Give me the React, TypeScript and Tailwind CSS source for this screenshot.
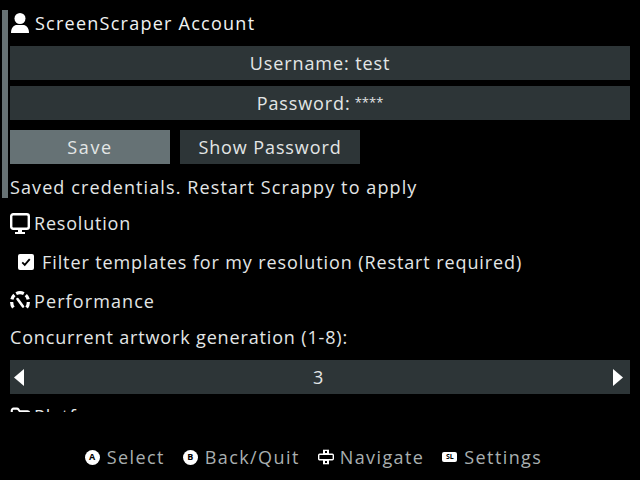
import { Folder } from 'lucide-react';

function UserIcon() {
  return (
    <svg viewBox="0 0 18 20" className="w-[18px] h-[20px] shrink-0" fill="#fff">
      <circle cx="9" cy="5.5" r="5.5" />
      <path d="M0 20 C0 14.5 3 12 6 12 H12 C15 12 18 14.5 18 20 Z" />
    </svg>
  );
}

function MonitorIcon() {
  return (
    <svg viewBox="0 0 20 21" className="w-[20px] h-[21px] shrink-0" fill="none">
      <rect x="1.2" y="1.2" width="17.6" height="14.6" rx="2" stroke="#fff" strokeWidth="2.4" />
      <path d="M8 17 H12 V19 H15 V21 H5 V19 H8 Z" fill="#fff" />
    </svg>
  );
}

function Gauge() {
  return (
    <svg viewBox="0 0 20 20" className="w-5 h-5 shrink-0" fill="none" stroke="#fff">
      <path d="M3.4 16.5 A8.4 8.4 0 0 1 1.7 11" strokeWidth="3.2" />
      <path d="M1.9 8.4 A8.4 8.4 0 0 1 4.4 4" strokeWidth="3.2" />
      <path d="M6.2 2.6 A8.4 8.4 0 0 1 13.8 2.6" strokeWidth="3.2" />
      <path d="M15.8 4.2 A8.4 8.4 0 0 1 18.2 8.4" strokeWidth="3.2" />
      <path d="M18.3 11 A8.4 8.4 0 0 1 16.6 16.5" strokeWidth="3.2" />
      <path d="M7.5 8 L13 15.5" strokeWidth="2.6" strokeLinecap="round" />
    </svg>
  );
}

function Dpad() {
  return (
    <svg viewBox="0 0 16 16" className="w-[16px] h-[16px] shrink-0" fill="none" stroke="#fff" strokeWidth="1.4">
      <rect x="5" y="0.7" width="6" height="4.6" fill="#fff" stroke="none" />
      <rect x="7" y="2" width="2" height="2" fill="#000" stroke="none" />
      <rect x="0.7" y="5.3" width="14.6" height="5.4" rx="1" />
      <rect x="5" y="10.7" width="6" height="4.6" fill="#fff" stroke="none" />
      <rect x="7" y="12" width="2" height="2" fill="#000" stroke="none" />
    </svg>
  );
}

function CircleHint({ label }: { label: string }) {
  return (
    <span className="w-[15px] h-[15px] rounded-full bg-white text-black text-[9px] tracking-normal font-bold flex items-center justify-center shrink-0">
      {label}
    </span>
  );
}

function Row({ children }: { children: React.ReactNode }) {
  return <div className="h-[34px] shrink-0 bg-[#2d3537] flex items-center justify-center">{children}</div>;
}

export default function App() {
  return (
    <div className="relative w-[640px] h-[480px] bg-black text-[#e3e6e6] overflow-hidden text-[18px] tracking-[0.9px] font-['Open_Sans','DejaVu_Sans',sans-serif]">
      {/* scrollbar */}
      <div className="absolute left-[2px] top-[10px] w-[6px] h-[188px] bg-[#677274]" />

      <div className="h-[412px] overflow-hidden px-[10px] pt-[10px] flex flex-col">
        <div className="h-[26px] mb-[2px] shrink-0 flex items-center gap-[6px] pl-px tracking-[1.25px] text-[#f0f2f2]">
          <UserIcon />
          ScreenScraper Account
        </div>
        <div className="mt-[8px] flex flex-col gap-[6px]">
          <Row>Username: test</Row>
          <Row>
            Password: <span className="ml-[4px] text-[13px] tracking-[0px]">****</span>
          </Row>
        </div>
        <div className="mt-[10px] flex gap-[10px] shrink-0">
          <div className="w-[160px] h-[34px] bg-[#667275] flex items-center justify-center tracking-[1.6px]">Save</div>
          <div className="w-[180px] h-[34px] bg-[#2d3537] flex items-center justify-center">Show Password</div>
        </div>
        <div className="mt-[10px] h-[26px] shrink-0 flex items-center tracking-[1.1px]">Saved credentials. Restart Scrappy to apply</div>

        <div className="mt-[10px] h-[26px] shrink-0 flex items-center gap-[4px] tracking-[0.8px]">
          <MonitorIcon />
          Resolution
        </div>
        <div className="mt-[13px] h-[26px] shrink-0 flex items-center pl-[8px] gap-[8px]">
          <span className="w-[16px] h-[16px] rounded-[2px] bg-white flex items-center justify-center shrink-0">
            <svg viewBox="0 0 12 12" className="w-[10px] h-[10px]" fill="none" stroke="#000" strokeWidth="2.2">
              <path d="M1.5 6.5 L4.5 9.5 L10.5 2.5" />
            </svg>
          </span>
          Filter templates for my resolution (Restart required)
        </div>
        <div className="mt-[13px] h-[26px] shrink-0 flex items-center gap-[4px] tracking-[1.1px]">
          <Gauge />
          Performance
        </div>
        <div className="mt-[10px] h-[26px] shrink-0 flex items-center tracking-[0.85px]">Concurrent artwork generation (1-8):</div>
        <div className="mt-[10px] h-[34px] shrink-0 bg-[#2d3537] flex items-center justify-between pl-[4px] pr-[7px]">
          <svg viewBox="0 0 10 17" className="w-[10px] h-[17px]"><path d="M10 0 V17 L0 8.5 Z" fill="#fff" /></svg>
          <span>3</span>
          <svg viewBox="0 0 10 17" className="w-[10px] h-[17px]"><path d="M0 0 V17 L10 8.5 Z" fill="#fff" /></svg>
        </div>
        <div className="mt-[9px] h-[26px] shrink-0 flex items-center gap-[3px]">
          <Folder className="w-[21px] h-[21px] text-white shrink-0" strokeWidth={2.4} />
          Platform
        </div>
      </div>

      <div className="h-[68px] pt-[22px] pr-[13px] flex items-center justify-center gap-[18px] tracking-[1.4px] text-[#a9afb0]">
        <div className="flex items-center gap-[7px]"><CircleHint label="A" />Select</div>
        <div className="flex items-center gap-[7px]"><CircleHint label="B" />Back/Quit</div>
        <div className="flex items-center gap-[6px]"><Dpad />Navigate</div>
        <div className="flex items-center gap-[7px]">
          <span className="w-[15px] h-[10px] rounded-[2px] bg-white text-black text-[7px] tracking-normal font-bold flex items-center justify-center shrink-0">SL</span>
          Settings
        </div>
      </div>
    </div>
  );
}
